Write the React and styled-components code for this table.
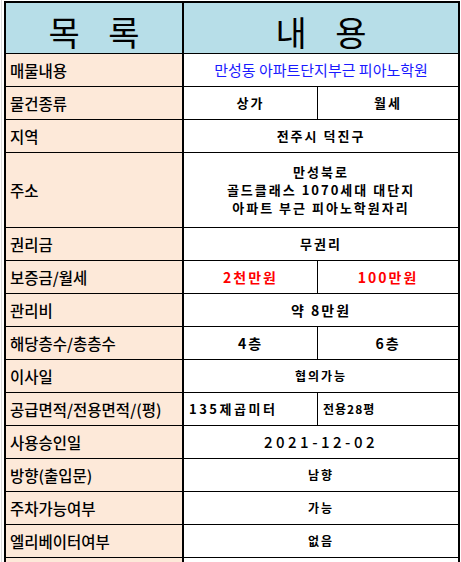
import React from 'react'
import styled, { createGlobalStyle } from 'styled-components'

const GlobalStyle = createGlobalStyle`
  html, body {
    margin: 0;
    padding: 0;
    background: #fff;
  }
  body {
    font-family: "Noto Sans CJK KR", "Noto Sans", sans-serif;
    color: #000;
  }
`

const Sheet = styled.div`
  margin-left: 1px;
  padding: 1px 0 0 2px;
  border-left: 1px solid #dcdcdc;
  height: 561px;
  overflow: hidden;
`

const Table = styled.div`
  width: 456px;
  border: 2px solid #000;
  border-bottom: none;
  box-sizing: border-box;
`

const HeaderRow = styled.div`
  display: grid;
  grid-template-columns: 178px 1fr;
  height: 50px;
  background: #b7dee8;
  border-bottom: 1px solid #000;
`

const HeaderCell = styled.div`
  display: flex;
  align-items: center;
  justify-content: center;
  padding-top: 8px;
  box-sizing: border-box;
  font-size: 34px;
  line-height: 1;
  word-spacing: 21px;
  border-right: ${p => (p.$divider ? '2px solid #000' : 'none')};
`

const Row = styled.div`
  display: grid;
  grid-template-columns: 178px 1fr;
  height: ${p => p.$h || 32}px;
  border-bottom: 1px solid #000;
`

const Label = styled.div`
  display: flex;
  align-items: center;
  padding-left: 4px;
  background: #fde9d9;
  border-right: 2px solid #000;
  font-size: 15.5px;
  font-weight: 500;
  white-space: nowrap;
  overflow: hidden;
`

const Split = styled.div`
  display: grid;
  grid-template-columns: 134px 1fr;
`

const Value = styled.div`
  display: flex;
  flex-direction: column;
  align-items: ${p => (p.$left ? 'flex-start' : 'center')};
  justify-content: center;
  padding-left: ${p => (p.$left ? '5px' : '0')};
  border-right: ${p => (p.$divider ? '1px solid #000' : 'none')};
  color: ${p => p.$color || '#000'};
  font-size: ${p => p.$size || 13}px;
  font-weight: ${p => p.$weight || 700};
  letter-spacing: ${p => (p.$spacing != null ? p.$spacing : 2)}px;
  line-height: 18px;
  white-space: nowrap;
  text-align: center;
`

export default function App () {
  return (
    <>
      <GlobalStyle />
      <Sheet>
        <Table>
          <HeaderRow>
            <HeaderCell $divider>목 록</HeaderCell>
            <HeaderCell>내 용</HeaderCell>
          </HeaderRow>
          <Row>
            <Label>매물내용</Label>
            <Value $color='#1a1aff' $size={15} $weight={400} $spacing={0}>
              만성동 아파트단지부근 피아노학원
            </Value>
          </Row>
          <Row>
            <Label>물건종류</Label>
            <Split>
              <Value $divider>상가</Value>
              <Value>월세</Value>
            </Split>
          </Row>
          <Row>
            <Label>지역</Label>
            <Value>전주시 덕진구</Value>
          </Row>
          <Row $h={74}>
            <Label>주소</Label>
            <Value>
              <span>만성북로</span>
              <span>골드클래스 1070세대 대단지</span>
              <span>아파트 부근 피아노학원자리</span>
            </Value>
          </Row>
          <Row>
            <Label>권리금</Label>
            <Value>무권리</Value>
          </Row>
          <Row>
            <Label>보증금/월세</Label>
            <Split>
              <Value $divider $color='#ff0000' $size={14}>2천만원</Value>
              <Value $color='#ff0000' $size={14}>100만원</Value>
            </Split>
          </Row>
          <Row>
            <Label>관리비</Label>
            <Value $size={14}>약 8만원</Value>
          </Row>
          <Row>
            <Label>해당층수/총층수</Label>
            <Split>
              <Value $divider $size={14}>4층</Value>
              <Value $size={14}>6층</Value>
            </Split>
          </Row>
          <Row>
            <Label>이사일</Label>
            <Value $size={12}>협의가능</Value>
          </Row>
          <Row>
            <Label>공급면적/전용면적/(평)</Label>
            <Split>
              <Value $divider $left $size={13} $spacing={2.5}>135제곱미터</Value>
              <Value $left $size={12} $spacing={1}>전용28평</Value>
            </Split>
          </Row>
          <Row>
            <Label>사용승인일</Label>
            <Value $weight={500} $size={15} $spacing={3.5}>2021-12-02</Value>
          </Row>
          <Row>
            <Label>방향(출입문)</Label>
            <Value $size={12}>남향</Value>
          </Row>
          <Row>
            <Label>주차가능여부</Label>
            <Value $size={12}>가능</Value>
          </Row>
          <Row>
            <Label>엘리베이터여부</Label>
            <Value $size={12}>없음</Value>
          </Row>
          <Row>
            <Label />
            <Value />
          </Row>
        </Table>
      </Sheet>
    </>
  )
}
